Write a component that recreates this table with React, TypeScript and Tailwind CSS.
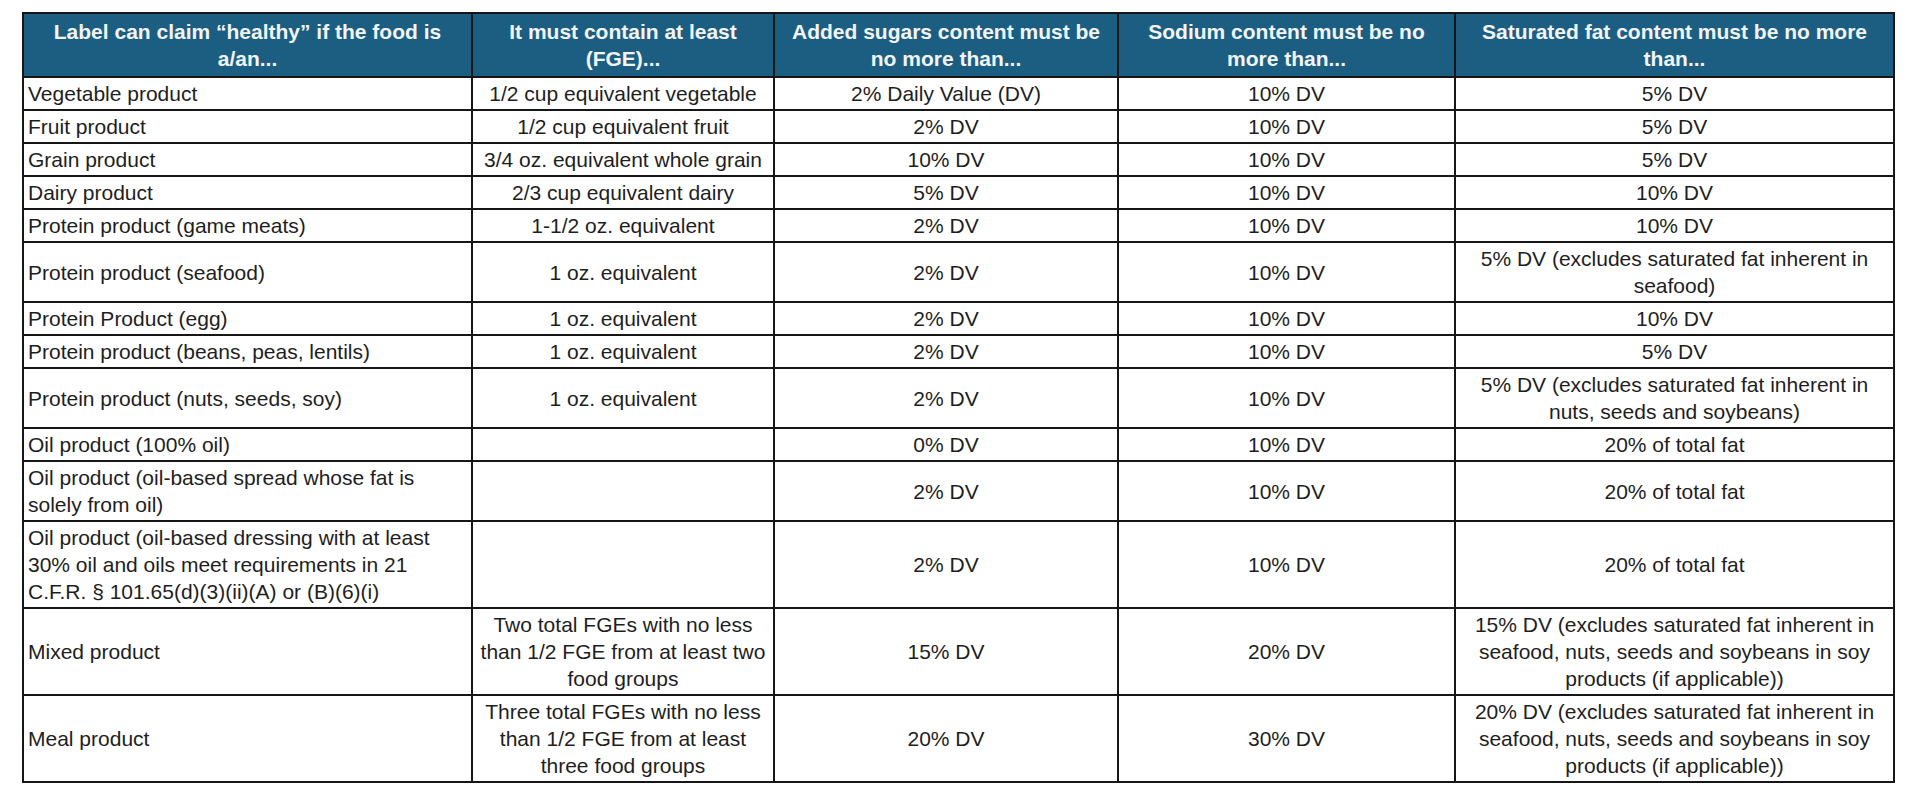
const headers = [
  ["Label can claim “healthy” if the food is", "a/an..."],
  ["It must contain at least", "(FGE)..."],
  ["Added sugars content must be", "no more than..."],
  ["Sodium content must be no", "more than..."],
  ["Saturated fat content must be no more", "than..."],
];

const SAT_MIXED = [
  "15% DV (excludes saturated fat inherent in",
  "seafood, nuts, seeds and soybeans in soy",
  "products (if applicable))",
];
const SAT_MEAL = [
  "20% DV (excludes saturated fat inherent in",
  "seafood, nuts, seeds and soybeans in soy",
  "products (if applicable))",
];

type Cell = string | string[];

const rows: Cell[][] = [
  ["Vegetable product", "1/2 cup equivalent vegetable", "2% Daily Value (DV)", "10% DV", "5% DV"],
  ["Fruit product", "1/2 cup equivalent fruit", "2% DV", "10% DV", "5% DV"],
  ["Grain product", "3/4 oz. equivalent whole grain", "10% DV", "10% DV", "5% DV"],
  ["Dairy product", "2/3 cup equivalent dairy", "5% DV", "10% DV", "10% DV"],
  ["Protein product (game meats)", "1-1/2 oz. equivalent", "2% DV", "10% DV", "10% DV"],
  [
    "Protein product (seafood)",
    "1 oz. equivalent",
    "2% DV",
    "10% DV",
    ["5% DV (excludes saturated fat inherent in", "seafood)"],
  ],
  ["Protein Product (egg)", "1 oz. equivalent", "2% DV", "10% DV", "10% DV"],
  ["Protein product (beans, peas, lentils)", "1 oz. equivalent", "2% DV", "10% DV", "5% DV"],
  [
    "Protein product (nuts, seeds, soy)",
    "1 oz. equivalent",
    "2% DV",
    "10% DV",
    ["5% DV (excludes saturated fat inherent in", "nuts, seeds and soybeans)"],
  ],
  ["Oil product (100% oil)", "", "0% DV", "10% DV", "20% of total fat"],
  [
    ["Oil product (oil-based spread whose fat is", "solely from oil)"],
    "",
    "2% DV",
    "10% DV",
    "20% of total fat",
  ],
  [
    [
      "Oil product (oil-based dressing with at least",
      "30% oil and oils meet requirements in 21",
      "C.F.R. § 101.65(d)(3)(ii)(A) or (B)(6)(i)",
    ],
    "",
    "2% DV",
    "10% DV",
    "20% of total fat",
  ],
  [
    "Mixed product",
    ["Two total FGEs with no less", "than 1/2 FGE from at least two", "food groups"],
    "15% DV",
    "20% DV",
    SAT_MIXED,
  ],
  [
    "Meal product",
    ["Three total FGEs with no less", "than 1/2 FGE from at least", "three food groups"],
    "20% DV",
    "30% DV",
    SAT_MEAL,
  ],
];

function Lines({ value }: { value: Cell }) {
  const lines = Array.isArray(value) ? value : [value];
  return (
    <>
      {lines.map((l, i) => (
        <span key={i} className="block whitespace-nowrap">
          {l || "\u00a0"}
        </span>
      ))}
    </>
  );
}

export default function App() {
  return (
    <div className="min-h-[800px] w-[1920px] bg-white pl-[22px] pt-[12px] font-['Liberation_Sans',Arial,sans-serif]">
      <table className="w-[1871px] table-fixed border-collapse border-2 border-[#161616] text-[21px] leading-[27px]">
        <colgroup>
          <col className="w-[449px]" />
          <col className="w-[302px]" />
          <col className="w-[344px]" />
          <col className="w-[337px]" />
          <col className="w-[439px]" />
        </colgroup>
        <thead>
          <tr className="bg-[#1c5e81]">
            {headers.map((h, i) => (
              <th
                key={i}
                className="border-2 border-[#161616] px-1 py-[4px] text-center font-bold text-[#f2f4f6]"
              >
                <Lines value={h} />
              </th>
            ))}
          </tr>
        </thead>
        <tbody className="text-[#1e1e1e]">
          {rows.map((r, ri) => (
            <tr key={ri}>
              {r.map((c, ci) => (
                <td
                  key={ci}
                  className={
                    ci === 0
                      ? "border-2 border-[#161616] py-[2px] pl-[4px] pr-1 text-left align-middle"
                      : "border-2 border-[#161616] px-1 py-[2px] text-center align-middle"
                  }
                >
                  <Lines value={c} />
                </td>
              ))}
            </tr>
          ))}
        </tbody>
      </table>
    </div>
  );
}
